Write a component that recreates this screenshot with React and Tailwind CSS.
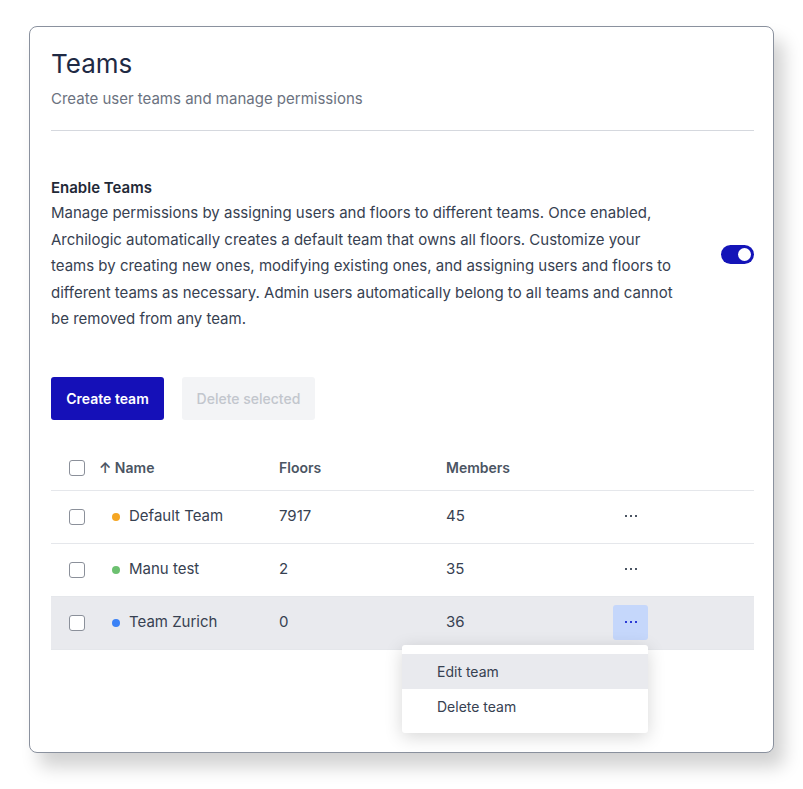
import React from 'react';

const teams = [
  { name: 'Default Team', color: 'bg-[#f5a623]', floors: '7917', members: '45' },
  { name: 'Manu test', color: 'bg-[#6cc070]', floors: '2', members: '35' },
  { name: 'Team Zurich', color: 'bg-[#3b82f6]', floors: '0', members: '36', active: true },
];

const Checkbox = () => (
  <span className="block w-[16px] h-[16px] rounded-[3px] border-[1.5px] border-[#8b909a] bg-white" />
);

const Dots = ({ active }) => (
  <div className={`w-[35px] h-[35px] rounded-[3px] flex items-center justify-center ${active ? 'bg-[#c5d7fb]' : ''}`}>
    <svg width="12" height="3" viewBox="0 0 12 3">
      <rect x="0" y="0" width="2" height="2" fill={active ? '#2b3bd6' : '#4b5563'} />
      <rect x="5" y="0" width="2" height="2" fill={active ? '#2b3bd6' : '#4b5563'} />
      <rect x="10" y="0" width="2" height="2" fill={active ? '#2b3bd6' : '#4b5563'} />
    </svg>
  </div>
);

export default function App() {
  return (
    <div className="min-h-[789px] bg-white pt-[26px] pl-[29px] font-['Inter','Noto_Sans',sans-serif]">
      <div className="w-[745px] h-[727px] rounded-[8px] border border-[#8a919e] bg-white pl-[21px] pr-[19px] pt-[20px] shadow-[10px_14px_18px_rgba(0,0,0,0.18)]">
        <h1 className="text-[26px] leading-[34px] text-[#1f2a44]">Teams</h1>
        <p className="mt-[8px] text-[15px] leading-[20px] text-[#6b7280]">Create user teams and manage permissions</p>
        <div className="mt-[21px] h-px bg-[#d5d8de]" />

        <div className="mt-[46px] flex items-center justify-between">
          <div className="w-[625px]">
            <div className="text-[15px] leading-[22px] font-semibold text-[#1f2937]">Enable Teams</div>
            <p className="mt-[1px] text-[15px] leading-[26.5px] text-[#374151]">
              Manage permissions by assigning users and floors to different teams. Once enabled, Archilogic automatically creates a default team that owns all floors. Customize your teams by creating new ones, modifying existing ones, and assigning users and floors to different teams as necessary. Admin users automatically belong to all teams and cannot be removed from any team.
            </p>
          </div>
          <div className="w-[33px] h-[19px] rounded-full bg-[#1414b8] flex items-center justify-end pr-[3px]">
            <span className="w-[13px] h-[13px] rounded-full bg-white" />
          </div>
        </div>

        <div className="mt-[44px] flex gap-[18px]">
          <button className="w-[113px] h-[43px] rounded-[3px] bg-[#1510b8] text-white text-[14px] font-semibold">Create team</button>
          <button className="w-[133px] h-[43px] rounded-[3px] bg-[#f3f4f6] text-[#c2c6cd] text-[14px] font-medium">Delete selected</button>
        </div>

        <div className="mt-[36px]">
          <div className="flex items-start h-[35px] border-b border-[#e5e7eb] text-[14px] leading-[24px] font-semibold text-[#4b5563]">
            <div className="w-[48px] pl-[18px] pt-[4px]"><Checkbox /></div>
            <div className="w-[180px]">↑ Name</div>
            <div className="w-[167px]">Floors</div>
            <div className="w-[167px]">Members</div>
          </div>
          {teams.map((t) => (
            <div key={t.name} className={`flex items-center h-[53px] border-b border-[#e5e7eb] text-[15px] text-[#374151] ${t.active ? 'bg-[#e9eaee]' : ''}`}>
              <div className="w-[48px] pl-[18px]"><Checkbox /></div>
              <div className="w-[180px] flex items-center pl-[13px]">
                <span className={`w-[8px] h-[8px] rounded-full ${t.color} mr-[9px]`} />
                {t.name}
              </div>
              <div className="w-[167px]">{t.floors}</div>
              <div className="w-[167px]">{t.members}</div>
              <Dots active={t.active} />
            </div>
          ))}
          <div className="relative">
            <div className="absolute left-[351px] top-[-5px] w-[246px] bg-white rounded-[3px] shadow-[0_4px_18px_rgba(0,0,0,0.16)] py-[9px] text-[14px] text-[#374151]">
              <div className="h-[35px] bg-[#e9eaee] flex items-center pl-[35px]">Edit team</div>
              <div className="h-[35px] flex items-center pl-[35px]">Delete team</div>
            </div>
          </div>
        </div>
      </div>
    </div>
  );
}
